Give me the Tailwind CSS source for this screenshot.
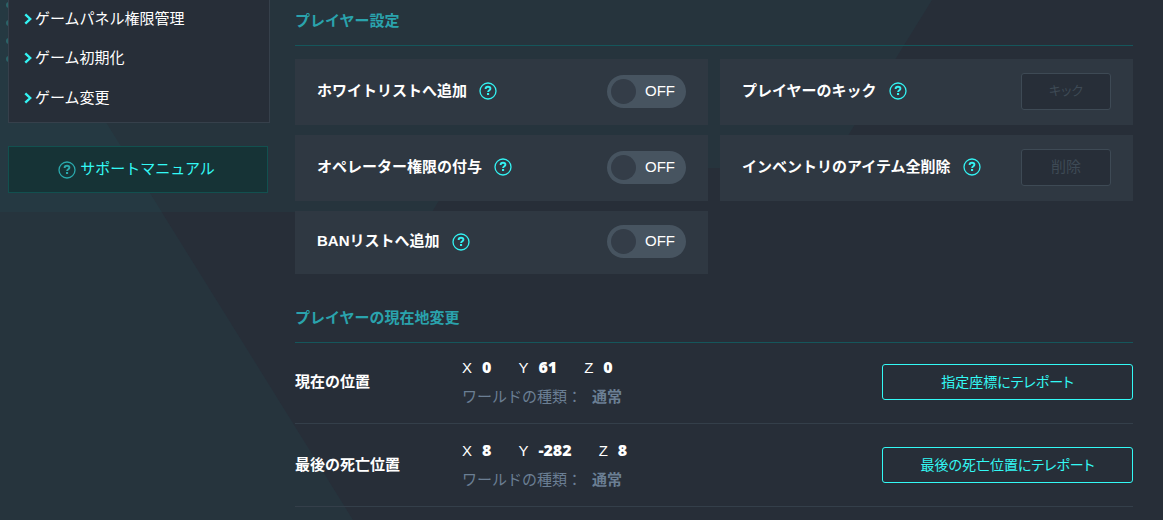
<!DOCTYPE html>
<html lang="ja">
<head>
  <meta charset="UTF-8" />
  <meta name="viewport" content="width=device-width, initial-scale=1.0" />
  <title>プレイヤー設定</title>
  <script src="https://cdn.jsdelivr.net/npm/@tailwindcss/browser@4"></script>
</head>
<body class="relative min-h-screen overflow-x-hidden bg-[#272e38] text-[15px] text-white font-['Liberation_Sans','Noto_Sans_CJK_JP',sans-serif]">
  <!-- background shapes -->
  <svg class="absolute top-0 left-0" width="940" height="520" viewBox="0 0 940 520" aria-hidden="true">
    <path d="M0 0H30L353 520H0Z" fill="#25d0c0" fill-opacity=".04" />
    <path d="M0 0H932L828 168H459L432 212H0Z" fill="#25d0c0" fill-opacity=".04" />
    <g fill="#2b6368">
      <circle cx="9" cy="5" r="3" />
      <circle cx="9" cy="23" r="3" />
      <circle cx="9" cy="41" r="3" />
      <circle cx="9" cy="59" r="3" />
    </g>
  </svg>

  <!-- icons, reused below -->
  <svg class="hidden" aria-hidden="true">
    <symbol id="help" viewBox="0 0 18 18">
      <circle cx="9" cy="9" r="8" fill="none" stroke="currentColor" stroke-width="1.3" />
      <path d="M6.6 7C6.6 5.4 7.6 4.8 9 4.8s2.4.7 2.4 1.9c0 1.5-2.3 1.6-2.3 3.3" fill="none" stroke="currentColor" stroke-width="1.9" />
      <rect x="8" y="11" width="2.1" height="2" fill="currentColor" />
    </symbol>
    <symbol id="arrow" viewBox="0 0 8 12">
      <path d="M1.3 1.3L6.2 6L1.3 10.7" fill="none" stroke="currentColor" stroke-width="2.4" />
    </symbol>
  </svg>

  <div class="relative flex items-start pl-2 pr-[30px]">
    <aside class="w-[262px] shrink-0">
      <nav class="border border-t-0 border-[#36404b] bg-[#272e38] pb-1 pl-[15px]">
        <a href="#" class="flex h-[38px] items-center gap-[3px]"><svg class="h-3 w-2 text-[#33f3f3]"><use href="#arrow" /></svg>ゲームパネル権限管理</a>
        <a href="#" class="flex h-10 items-center gap-[3px]"><svg class="h-3 w-2 text-[#33f3f3]"><use href="#arrow" /></svg>ゲーム初期化</a>
        <a href="#" class="flex h-10 items-center gap-[3px]"><svg class="h-3 w-2 text-[#33f3f3]"><use href="#arrow" /></svg>ゲーム変更</a>
      </nav>
      <a href="#" class="mt-[23px] mr-[2px] flex h-[47px] items-center justify-center gap-1 border border-[#12504f] bg-[#163336] pr-[3px] text-[#33f9f5]">
        <svg class="size-[18px] text-[#2aa9ad]"><use href="#help" /></svg>サポートマニュアル
      </a>
    </aside>

    <main class="ml-[25px] min-w-0 flex-1">
      <section>
        <h2 class="flex h-[46px] items-center border-b border-[#15565b] pb-[2px] font-bold text-[#2aa3ad]">プレイヤー設定</h2>
        <div class="mt-[13px] grid grid-cols-2 gap-x-3 gap-y-[10px]">
          <div class="flex h-[66px] items-center justify-between bg-[#2f3842] px-[22px] pb-[2px]">
            <div class="flex items-center gap-3 font-bold"><label for="whitelist">ホワイトリストへ追加</label><svg class="size-[18px] text-[#33f3f3]"><use href="#help" /></svg></div>
            <label class="flex h-[33px] w-[79px] items-center gap-[9px] rounded-full bg-[#475460] pl-1">
              <input id="whitelist" type="checkbox" class="size-[25px] appearance-none rounded-full bg-[#343d48]" />OFF
            </label>
          </div>
          <div class="flex h-[66px] items-center justify-between bg-[#2f3842] px-[22px] pb-[2px]">
            <div class="flex items-center gap-3 font-bold">プレイヤーのキック<svg class="size-[18px] text-[#33f3f3]"><use href="#help" /></svg></div>
            <button disabled class="h-[37px] w-[90px] rounded-[3px] border border-[#3e4a55] bg-[#272e38] text-[13px] text-[#3e4a55] [font-feature-settings:'palt']">キック</button>
          </div>
          <div class="flex h-[66px] items-center justify-between bg-[#2f3842] px-[22px] pb-[2px]">
            <div class="flex items-center gap-3 font-bold"><label for="operator">オペレーター権限の付与</label><svg class="size-[18px] text-[#33f3f3]"><use href="#help" /></svg></div>
            <label class="flex h-[33px] w-[79px] items-center gap-[9px] rounded-full bg-[#475460] pl-1">
              <input id="operator" type="checkbox" class="size-[25px] appearance-none rounded-full bg-[#343d48]" />OFF
            </label>
          </div>
          <div class="flex h-[66px] items-center justify-between bg-[#2f3842] px-[22px] pb-[2px]">
            <div class="flex items-center gap-3 font-bold">インベントリのアイテム全削除<svg class="size-[18px] text-[#33f3f3]"><use href="#help" /></svg></div>
            <button disabled class="h-[37px] w-[90px] rounded-[3px] border border-[#3e4a55] bg-[#272e38] text-[#3e4a55]">削除</button>
          </div>
          <div class="flex h-[63px] items-center justify-between bg-[#2f3842] px-[22px] pb-[2px]">
            <div class="flex items-center gap-3 font-bold"><label for="ban">BANリストへ追加</label><svg class="size-[18px] text-[#33f3f3]"><use href="#help" /></svg></div>
            <label class="flex h-[33px] w-[79px] items-center gap-[9px] rounded-full bg-[#475460] pl-1">
              <input id="ban" type="checkbox" class="size-[25px] appearance-none rounded-full bg-[#343d48]" />OFF
            </label>
          </div>
        </div>
      </section>

      <section class="mt-[23px]">
        <h2 class="flex h-[46px] items-center border-b border-[#15565b] pb-[2px] font-bold text-[#2aa3ad]">プレイヤーの現在地変更</h2>
        <div class="flex items-center border-b border-[#343f4a] pt-[10px] pb-3">
          <h3 class="w-[167px] font-bold">現在の位置</h3>
          <div class="flex-1 leading-[29px]">
            <p class="flex gap-[27px]">
              <span>X<b class="ml-[10px] text-base/[29px] font-['Open_Sans',sans-serif] font-extrabold">0</b></span>
              <span>Y<b class="ml-[10px] text-base/[29px] font-['Open_Sans',sans-serif] font-extrabold">61</b></span>
              <span>Z<b class="ml-[10px] text-base/[29px] font-['Open_Sans',sans-serif] font-extrabold">0</b></span>
            </p>
            <p class="text-[#6b7f94]">ワールドの種類：<b class="ml-[10px]">通常</b></p>
          </div>
          <button class="h-[36px] w-[251px] rounded-[3px] border border-[#33f9f5] text-sm text-[#33f9f5] [font-feature-settings:'palt']">指定座標にテレポート</button>
        </div>
        <div class="flex items-center border-b border-[#343f4a] py-3">
          <h3 class="w-[167px] font-bold">最後の死亡位置</h3>
          <div class="flex-1 leading-[29px]">
            <p class="flex gap-[27px]">
              <span>X<b class="ml-[10px] text-base/[29px] font-['Open_Sans',sans-serif] font-extrabold">8</b></span>
              <span>Y<b class="ml-[10px] text-base/[29px] font-['Open_Sans',sans-serif] font-extrabold">-282</b></span>
              <span>Z<b class="ml-[10px] text-base/[29px] font-['Open_Sans',sans-serif] font-extrabold">8</b></span>
            </p>
            <p class="text-[#6b7f94]">ワールドの種類：<b class="ml-[10px]">通常</b></p>
          </div>
          <button class="h-[36px] w-[251px] rounded-[3px] border border-[#33f9f5] text-sm text-[#33f9f5] [font-feature-settings:'palt']">最後の死亡位置にテレポート</button>
        </div>
      </section>
    </main>
  </div>
</body>
</html>
